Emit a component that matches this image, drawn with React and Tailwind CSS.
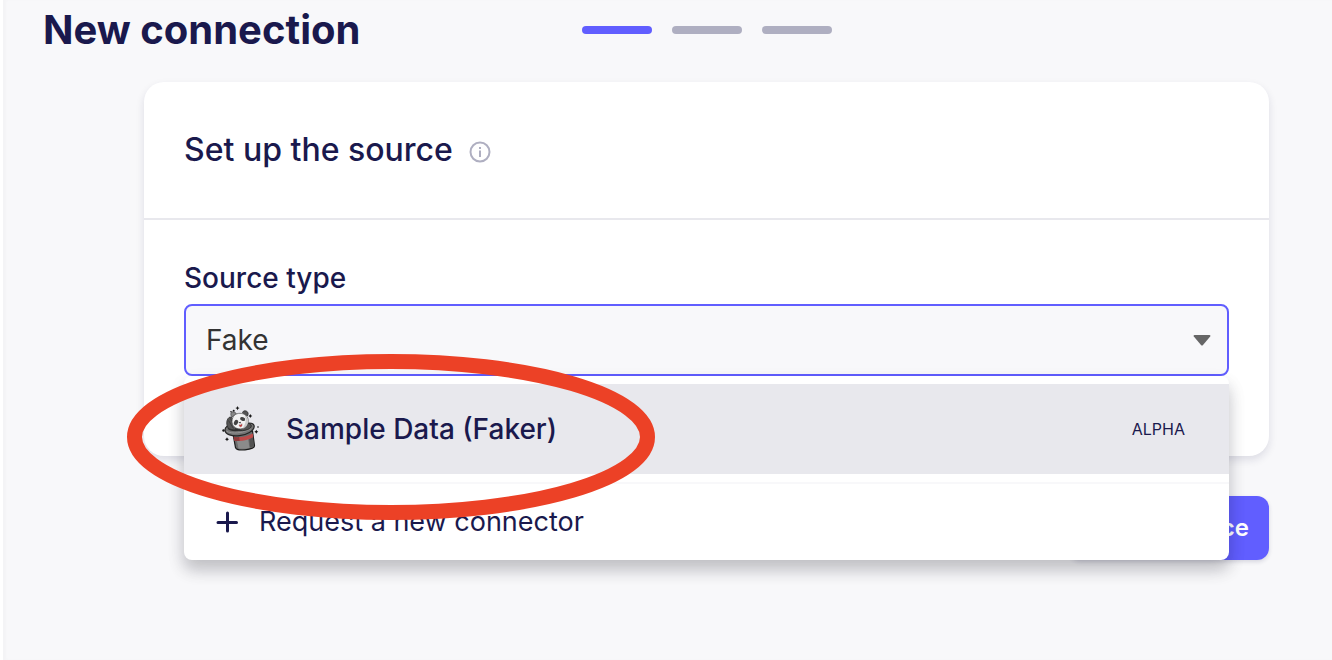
import { useState } from "react"

const steps = ["Source", "Destination", "Connection"]

function Steps({ current }) {
  return (
    <ol className="flex gap-5">
      {steps.map((step, i) => (
        <li
          key={step}
          aria-label={step}
          className={i === current ? "h-2 w-[70px] rounded-full bg-[#615eff]" : "h-2 w-[70px] rounded-full bg-[#afafc1]"}
        />
      ))}
    </ol>
  )
}

function InfoIcon() {
  return (
    <svg viewBox="0 0 22 22" className="size-[22px]" fill="none" aria-hidden="true">
      <circle cx="11" cy="11" r="9.5" stroke="#afafc1" strokeWidth="2" />
      <path d="M11 9.5v6.5M11 6v2" stroke="#afafc1" strokeWidth="2" />
    </svg>
  )
}

function FakerLogo() {
  return (
    <svg viewBox="0 0 40 46" className="h-[46px] w-10" aria-hidden="true">
      {/* magic dust */}
      <g fill="#161616">
        <path d="M17.500 0l.7 1.400 1.400.7-1.400.7-.7 1.400-.7-1.400-1.400-.7 1.400-.7z" />
        <path d="M30.300 8l.7 1.300 1.300.7-1.300.7-.7 1.300-.7-1.300-1.300-.7 1.300-.7z" />
        <path d="M36.300 23.700l.7 1.300 1.300.7-1.300.7-.7 1.300-.7-1.300-1.300-.7 1.300-.7z" />
        <path d="M7 31.300l.7 1.300 1.300.7-1.300.7-.7 1.300-.7-1.300-1.300-.7 1.300-.7z" />
        <circle cx="3.500" cy="24.500" r="1.200" />
        <circle cx="38" cy="21" r=".8" />
        <circle cx="13.700" cy="4.700" r="1" />
        <circle cx="11" cy="5.700" r=".8" />
      </g>
      {/* hat body */}
      <path d="M13 28l2.500 13.500c.8 2.500 5 2.800 9.500 2.300 5-.5 9.500-1.800 9.500-4L32.500 25z" fill="#6c6c6c" stroke="#1b1b1b" strokeWidth="1.200" />
      <path d="M17 35l1.500 7.500c3 .7 8 .2 11-.6L28 32z" fill="#8b8b8b" />
      <path d="M29 31l1 10.500c2-.5 3.700-1 3.700-2L33 30z" fill="#525252" />
      <path d="M13.600 30.800c6.500 1.200 14-.5 19.200-3.300l.4 3.800c-5 3-12.500 4.500-18.800 3.500z" fill="#bf4a49" />
      <path d="M13.600 30.800l.8 4c1.800.3 3.500.4 5.300.2l-.6-3.900c-1.900.1-3.700 0-5.500-.3z" fill="#8f3b3b" />
      {/* brim */}
      <path d="M5 24c0-3.500 4-5 8-5.500l16-1.500c3.500 0 5.500 1.300 5.200 3.600-.5 4.500-7.200 8-14.700 9C12 30.500 5 28.500 5 24z" fill="#737373" stroke="#242424" strokeWidth="1.200" />
      <path d="M7.500 22.500c2 3 8 3.200 14 2 4.500-.9 9-2.800 10.500-5L12 20z" fill="#303030" />
      <path d="M6.500 25.200c5 2.900 16 2.400 24.500-2.500" stroke="#969696" strokeWidth="1" fill="none" />
      {/* panda */}
      <path d="M10 11c-3.500 1.500-4 6.500-2.300 10.500 2 2.200 5.500 2.700 8.300 2.200L13.500 14c-.8-1.700-2-3.100-3.500-3z" fill="#555" stroke="#292929" strokeWidth=".8" />
      <path d="M8.500 14.500l5 8M10.500 12.500l5 8.500" stroke="#303030" strokeWidth=".7" />
      <path d="M19 24c1.500-3.500 5-6.500 8.500-6.700 3 0 4.300 2.200 3.500 4-1.500 2-5 3-8.500 3.300z" fill="#555" stroke="#242424" strokeWidth=".8" />
      <path d="M12 11c-2-2.200-1.300-5 .8-5.200 1.700-.2 3.200 1 3.500 2.200z" fill="#888" stroke="#404040" strokeWidth=".7" />
      <path d="M22.500 6.500c.6-2 3.500-2.300 5-.6 1.300 1.700.5 4.100-1.500 5z" fill="#555" stroke="#303030" strokeWidth=".8" />
      <path d="M12 15.300c.2-5 3.600-8.100 8-8 4.700.1 8.400 3.200 8.300 7.600-.1 4.800-3.500 7.900-7.900 8-4.900.1-8.500-3-8.400-7.600z" fill="#f2f2f2" stroke="#555" strokeWidth=".7" />
      <path d="M24.500 9.500c2 3.500 1.500 8.500-2 12.700 3.800-1.200 5.500-4 5.300-7.500-.1-2.200-1.300-4.200-3.300-5.200z" fill="#c9c9c9" />
      <ellipse cx="16" cy="16.500" rx="2" ry="2.700" fill="#444" transform="rotate(25 16 16.500)" />
      <ellipse cx="22.600" cy="13" rx="2.600" ry="1.900" fill="#444" transform="rotate(20 22.600 13)" />
      <path d="M18.500 16.500l2.500-.7-.7 1.700z" fill="#222" />
      <path d="M19.200 18.700c1 .6 2.200.1 2.700-1 .6 1.600-.1 3-1.200 3.100-.9.1-1.500-.9-1.500-2.100z" fill="#c93e3e" stroke="#6b2828" strokeWidth=".3" />
    </svg>
  )
}

function PlusIcon() {
  return (
    <svg viewBox="0 0 22 22" className="size-[22px]" fill="none" aria-hidden="true">
      <path d="M11.500 2v18M2 11.500h18.500" stroke="#1a194d" strokeWidth="3" strokeLinecap="round" />
    </svg>
  )
}

function SourceMenu() {
  return (
    <div className="absolute inset-x-0 top-full z-10 rounded-lg bg-white pt-2 shadow-[0_8px_20px_rgba(26,25,77,0.08),0_10px_16px_rgba(0,0,0,0.18)]">
      <ul id="source-options" role="listbox" aria-label="Source type">
        <li role="option" aria-selected="true" className="flex h-[90px] items-center bg-[#e8e8ed] pr-11 pl-9">
          <FakerLogo />
          <span className="ml-[26px] grow text-[28px] leading-9 font-medium">Sample Data (Faker)</span>
          <span className="text-base">ALPHA</span>
        </li>
      </ul>
      <button type="button" className="mt-2 flex h-[78px] w-full items-center gap-[21px] border-t-2 border-[#f8f8fa] pl-8 text-[27px] leading-9">
        <PlusIcon />
        Request a new connector
      </button>

      {/* hand drawn highlight round the option */}
      <svg viewBox="0 0 528 168" className="pointer-events-none absolute -top-[23px] -left-[57px] h-[168px] w-[528px]" fill="none" aria-hidden="true">
        <ellipse cx="264" cy="84" rx="256.500" ry="75.500" stroke="#ec4126" strokeWidth="15" />
      </svg>
    </div>
  )
}

function SourceSelect() {
  const [query, setQuery] = useState("Fake")

  return (
    <div className="relative">
      <div className="flex h-[72px] items-center rounded-lg border-2 border-[#615eff] bg-[#f8f8fa] pr-4 pl-5">
        <input
          id="source-type"
          role="combobox"
          aria-expanded="true"
          aria-controls="source-options"
          autoComplete="off"
          value={query}
          onChange={e => setQuery(e.target.value)}
          className="min-w-0 grow bg-transparent text-[28px] leading-9 text-[#333333] outline-none"
        />
        <button type="button" aria-label="Toggle options">
          <svg viewBox="0 0 18 12" className="h-3 w-[18px]" aria-hidden="true">
            <path d="M1.500 1h15q1.500 0 .7 1.500L10 11q-1 1-2 0L.8 2.500Q0 1 1.500 1z" fill="#666666" />
          </svg>
        </button>
      </div>
      <SourceMenu />
    </div>
  )
}

export default function App() {
  return (
    <div className="min-h-screen border-l-3 border-white bg-[#f8f8fa] font-['Inter',sans-serif] text-[#1a194d] shadow-[inset_3px_0_3px_rgba(0,0,0,0.02)]">
      <header className="grid h-[60px] items-center">
        <h1 className="col-start-1 row-start-1 pl-10 text-[40px] leading-[60px] font-bold">New connection</h1>
        <div className="col-start-1 row-start-1 flex justify-center pr-[63px] pl-[141px]">
          <Steps current={0} />
        </div>
      </header>

      <main className="pt-[22px] pr-[63px] pb-20 pl-[141px]">
        <section className="rounded-[20px] bg-white shadow-[0_4px_8px_rgba(26,25,77,0.12)]">
          <div className="flex h-[138px] items-center gap-4 border-b-2 border-[#e8e8ed] px-10">
            <h2 className="text-[32px] leading-10 font-medium">Set up the source</h2>
            <button type="button" aria-label="About sources" className="mt-1">
              <InfoIcon />
            </button>
          </div>
          <div className="px-10 pt-10 pb-20">
            <label htmlFor="source-type" className="mb-2 block text-[28px] leading-9 font-medium">Source type</label>
            <SourceSelect />
          </div>
        </section>

        <div className="mt-10 flex justify-end">
          <button type="button" className="h-16 rounded-xl bg-[#615eff] px-5 text-2xl font-semibold text-white shadow-[0_2px_4px_rgba(26,25,77,0.15)]">
            Set up source
          </button>
        </div>
      </main>
    </div>
  )
}
